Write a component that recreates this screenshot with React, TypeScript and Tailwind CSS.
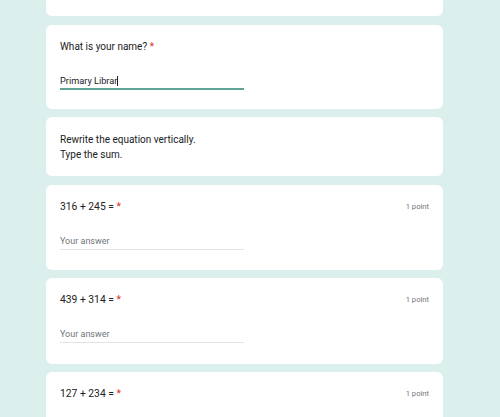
import React from "react";

function Question({ title, h }: { title: string; h: string }) {
  return (
    <div className={`bg-white rounded-[6px] px-[14px] pt-[15px] shrink-0 ${h}`}>
      <div className="flex justify-between items-center h-[14px]">
        <div className="text-[10.3px] leading-[14px] text-[#202124]">
          {title} <span className="text-[#d93025]">*</span>
        </div>
        <div className="text-[7.6px] leading-[14px] text-[#70757a]">1 point</div>
      </div>
      <div className="mt-[21px] w-[184px] border-b border-[#e3e3e3] pb-[2px] text-[9px] leading-[12px] text-[#70757a]">
        Your answer
      </div>
    </div>
  );
}

export default function App() {
  return (
    <div
      className="w-[500px] h-[417px] overflow-hidden bg-[#dbefec] flex justify-start"
      style={{ fontFamily: "Roboto, 'Liberation Sans', sans-serif" }}
    >
      <div className="ml-[46px] w-[397px] flex flex-col gap-[8.5px] mt-[-30px]">
        <div className="bg-white rounded-[6px] h-[46px] shrink-0" />
        <div className="bg-white rounded-[6px] px-[14px] pt-[15px] h-[84px] shrink-0">
          <div className="text-[10px] leading-[14px] text-[#202124]">
            What is your name? <span className="text-[#d93025]">*</span>
          </div>
          <div className="mt-[21px] w-[184px] border-b-2 border-[#5fa597] pb-[1px] text-[9.2px] leading-[12px] text-[#202124]">
            Primary Librar<span className="inline-block w-px h-[10px] bg-[#202124] align-middle"></span>
          </div>
        </div>
        <div className="bg-white rounded-[6px] px-[14px] pt-[15px] h-[59px] shrink-0 text-[10px] text-[#202124] leading-[15px]">
          <div>Rewrite the equation vertically.</div>
          <div>Type the sum.</div>
        </div>
        <Question title="316 + 245 =" h="h-[85px]" />
        <Question title="439 + 314 =" h="h-[85.5px]" />
        <Question title="127 + 234 =" h="h-[85px]" />
      </div>
    </div>
  );
}
